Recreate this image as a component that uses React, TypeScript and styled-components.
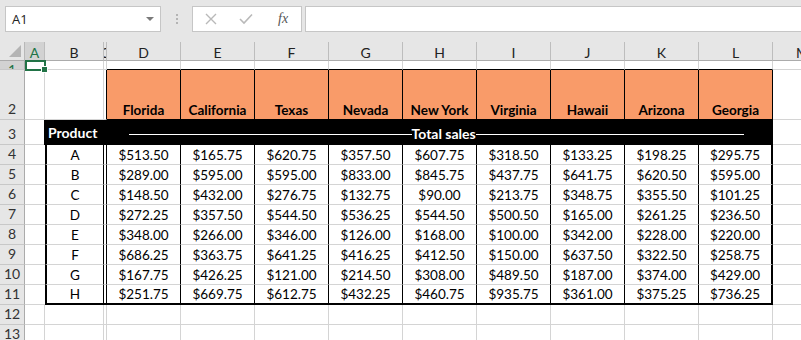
import React from 'react'
import styled, { createGlobalStyle, css } from 'styled-components'

const GlobalStyle = createGlobalStyle`
  html, body {
    margin: 0;
    padding: 0;
    background: #ffffff;
    overflow: hidden;
  }
  body {
    font-family: Lato, 'Liberation Sans', sans-serif;
  }
`

const GRID = '#d4d4d4'
const BLACK = '#000000'
const GREEN = '#217346'

const COLS = ['A', 'B', 'C', 'D', 'E', 'F', 'G', 'H', 'I', 'J', 'K', 'L', 'M']
const ROW_HEIGHTS = [9, 50, 25, 20, 20, 20, 20, 20, 20, 20, 20, 20, 20]

const STATES = ['Florida', 'California', 'Texas', 'Nevada', 'New York', 'Virginia', 'Hawaii', 'Arizona', 'Georgia']

const SALES: [string, number[]][] = [
  ['A', [513.5, 165.75, 620.75, 357.5, 607.75, 318.5, 133.25, 198.25, 295.75]],
  ['B', [289, 595, 595, 833, 845.75, 437.75, 641.75, 620.5, 595]],
  ['C', [148.5, 432, 276.75, 132.75, 90, 213.75, 348.75, 355.5, 101.25]],
  ['D', [272.25, 357.5, 544.5, 536.25, 544.5, 500.5, 165, 261.25, 236.5]],
  ['E', [348, 266, 346, 126, 168, 100, 342, 228, 220]],
  ['F', [686.25, 363.75, 641.25, 416.25, 412.5, 150, 637.5, 322.5, 258.75]],
  ['G', [167.75, 426.25, 121, 214.5, 308, 489.5, 187, 374, 429]],
  ['H', [251.75, 669.75, 612.75, 432.25, 460.75, 935.75, 361, 375.25, 736.25]],
]

const money = (v: number) => `$${v.toFixed(2)}`

/* ---------- formula bar ---------- */

const Toolbar = styled.div`
  height: 42px;
  background: #e6e6e6;
  display: flex;
  align-items: flex-start;
  padding: 6px 0 0 5px;
  box-sizing: border-box;
`

const NameBox = styled.div`
  width: 156px;
  height: 26px;
  box-sizing: border-box;
  background: #fff;
  border: 1px solid #c6c6c6;
  display: flex;
  align-items: center;
  justify-content: space-between;
  padding: 0 6px 0 6px;
  font-family: 'Open Sans', 'Liberation Sans', sans-serif;
  font-size: 13px;
  color: #222;
`

const Caret = styled.span`
  width: 0;
  height: 0;
  border-left: 4px solid transparent;
  border-right: 4px solid transparent;
  border-top: 4px solid #7a7a7a;
`

const Grip = styled.div`
  width: 31px;
  height: 26px;
  display: flex;
  flex-direction: column;
  align-items: center;
  justify-content: center;
  gap: 2px;
  span {
    width: 2px;
    height: 2px;
    background: #b4b4b4;
  }
`

const IconBox = styled.div`
  width: 110px;
  height: 26px;
  box-sizing: border-box;
  background: #fff;
  border: 1px solid #c6c6c6;
  display: flex;
  align-items: center;
  padding-left: 12px;
  gap: 22px;
`

const Fx = styled.span`
  font-family: 'Liberation Serif', serif;
  font-style: italic;
  font-size: 14px;
  color: #555;
  margin-left: 3px;
`

const FormulaInput = styled.div`
  flex: 1;
  height: 26px;
  margin-left: 3px;
  box-sizing: border-box;
  background: #fff;
  border: 1px solid #c6c6c6;
  border-right: none;
`

/* ---------- sheet ---------- */

const Sheet = styled.div`
  position: relative;
  display: grid;
  grid-template-columns: 25px 20px 59px 3px repeat(9, 74px) 60px;
  grid-template-rows: 19px ${ROW_HEIGHTS.map((h) => `${h}px`).join(' ')};
  font-family: Lato, 'Liberation Sans', sans-serif;
  font-size: 13.5px;
  color: #000;
  overflow: hidden;
`

const Corner = styled.div`
  background: #e6e6e6;
  border-right: 1px solid #b8b8b8;
  border-bottom: 1px solid #ababab;
  box-sizing: border-box;
  position: relative;
  &::after {
    content: '';
    position: absolute;
    right: 3px;
    bottom: 3px;
    border-left: 12px solid transparent;
    border-bottom: 12px solid #b4b4b4;
  }
`

const ColHeader = styled.div<{ $active?: boolean }>`
  background: ${({ $active }) => ($active ? '#d2d2d2' : '#e6e6e6')};
  color: ${({ $active }) => ($active ? GREEN : '#222')};
  border-right: 1px solid #bdbdbd;
  border-bottom: 1px solid #ababab;
  box-sizing: border-box;
  display: flex;
  align-items: center;
  justify-content: center;
  overflow: hidden;
  font-size: 14px;
  padding-top: 2px;
`

const RowHeader = styled.div<{ $active?: boolean }>`
  background: ${({ $active }) => ($active ? '#d2d2d2' : '#e6e6e6')};
  color: ${({ $active }) => ($active ? GREEN : '#333')};
  border-right: 1px solid #ababab;
  border-bottom: 1px solid #c8c8c8;
  box-sizing: border-box;
  display: flex;
  align-items: ${({ $active }) => ($active ? 'flex-start' : 'flex-end')};
  justify-content: center;
  overflow: hidden;
  font-size: 14px;
  line-height: 18px;
  padding-bottom: 1px;
`

const Cell = styled.div<{
  $right?: string
  $bottom?: string
  $left?: string
  $fill?: string
  $bold?: boolean
}>`
  box-sizing: border-box;
  border-right: ${({ $right }) => $right ?? `1px solid ${GRID}`};
  border-bottom: ${({ $bottom }) => $bottom ?? `1px solid ${GRID}`};
  ${({ $left }) =>
    $left &&
    css`
      border-left: ${$left};
    `}
  background: ${({ $fill }) => $fill ?? '#fff'};
  font-weight: ${({ $bold }) => ($bold ? 700 : 400)};
  display: flex;
  align-items: flex-end;
  justify-content: center;
  line-height: 18px;
  white-space: nowrap;
  overflow: hidden;
`

const Band = styled.div`
  grid-column: 3 / 14;
  background: #000;
  color: #fff;
  font-weight: 700;
  font-size: 14px;
  display: flex;
  align-items: center;
  line-height: 18px;
  border-left: 1px solid #000;
  margin-left: -1px;
`

const BandLabel = styled.span`
  width: 62px;
  padding-left: 3px;
  box-sizing: border-box;
`

const BandTitle = styled.div`
  flex: 1;
  display: flex;
  align-items: center;
  padding: 2px 29px 0 22px;
`

const Rule = styled.span<{ $grow: number }>`
  flex: ${({ $grow }) => $grow} 1 0;
  height: 1px;
  background: #fff;
  margin-top: 2px;
`

const Selection = styled.div`
  position: absolute;
  left: 25px;
  top: 18px;
  width: 21px;
  height: 11px;
  border: 2px solid ${GREEN};
  box-sizing: border-box;
  pointer-events: none;
  &::after {
    content: '';
    position: absolute;
    right: -4px;
    bottom: -4px;
    width: 5px;
    height: 5px;
    background: ${GREEN};
    border: 1px solid #fff;
  }
`

const thin = `1px solid ${BLACK}`
const thick = `2px solid ${BLACK}`

const cellBorders = (row: number, col: number) => {
  const out: { $right?: string; $bottom?: string; $left?: string } = {}
  if (row === 1 && col >= 3 && col <= 11) out.$bottom = thin
  if (row === 2) {
    if (col >= 2 && col <= 11) out.$right = thin
    if (col >= 3 && col <= 11) out.$bottom = thin
  }
  if (row >= 4 && row <= 11) {
    if (col === 0) out.$right = 'none'
    if (col === 1) out.$left = thick
    if (col >= 1 && col <= 10) out.$right = thin
    if (col === 11) out.$right = thick
    if (row === 11 && col >= 1 && col <= 11) out.$bottom = thick
  }
  return out
}

const cellContent = (row: number, col: number) => {
  if (row === 2 && col >= 3 && col <= 11) return STATES[col - 3]
  if (row >= 4 && row <= 11) {
    const [label, values] = SALES[row - 4]
    if (col === 1) return label
    if (col >= 3 && col <= 11) return money(values[col - 3])
  }
  return ''
}

export default function App() {
  const rows = ROW_HEIGHTS.map((_, i) => i + 1)
  return (
    <>
      <GlobalStyle />
      <Toolbar>
        <NameBox>
          A1
          <Caret />
        </NameBox>
        <Grip>
          <span />
          <span />
          <span />
        </Grip>
        <IconBox>
          <svg width="12" height="12" viewBox="0 0 12 12">
            <path d="M1 1 L11 11 M11 1 L1 11" stroke="#b9b9b9" strokeWidth="1.4" />
          </svg>
          <svg width="14" height="12" viewBox="0 0 14 12">
            <path d="M1 6 L5 10 L13 1.5" stroke="#b9b9b9" strokeWidth="1.6" fill="none" />
          </svg>
          <Fx>fx</Fx>
        </IconBox>
        <FormulaInput />
      </Toolbar>
      <Sheet>
        <Corner />
        {COLS.map((c, i) => (
          <ColHeader key={c} $active={i === 0}>
            {c}
          </ColHeader>
        ))}
        {rows.map((row) => (
          <React.Fragment key={row}>
            <RowHeader $active={row === 1}>{row}</RowHeader>
            {row === 3 ? (
              <>
                <Cell $right="none" />
                <Band>
                  <BandLabel>Product</BandLabel>
                  <BandTitle>
                    <Rule $grow={278} />
                    <span>Total sales</span>
                    <Rule $grow={264} />
                  </BandTitle>
                </Band>
                <Cell />
              </>
            ) : (
              COLS.map((_, col) => (
                <Cell
                  key={col}
                  {...cellBorders(row, col)}
                  $fill={row === 2 && col >= 3 && col <= 11 ? '#f99b69' : undefined}
                  $bold={row === 2}
                >
                  {cellContent(row, col)}
                </Cell>
              ))
            )}
          </React.Fragment>
        ))}
        <Selection />
      </Sheet>
    </>
  )
}
